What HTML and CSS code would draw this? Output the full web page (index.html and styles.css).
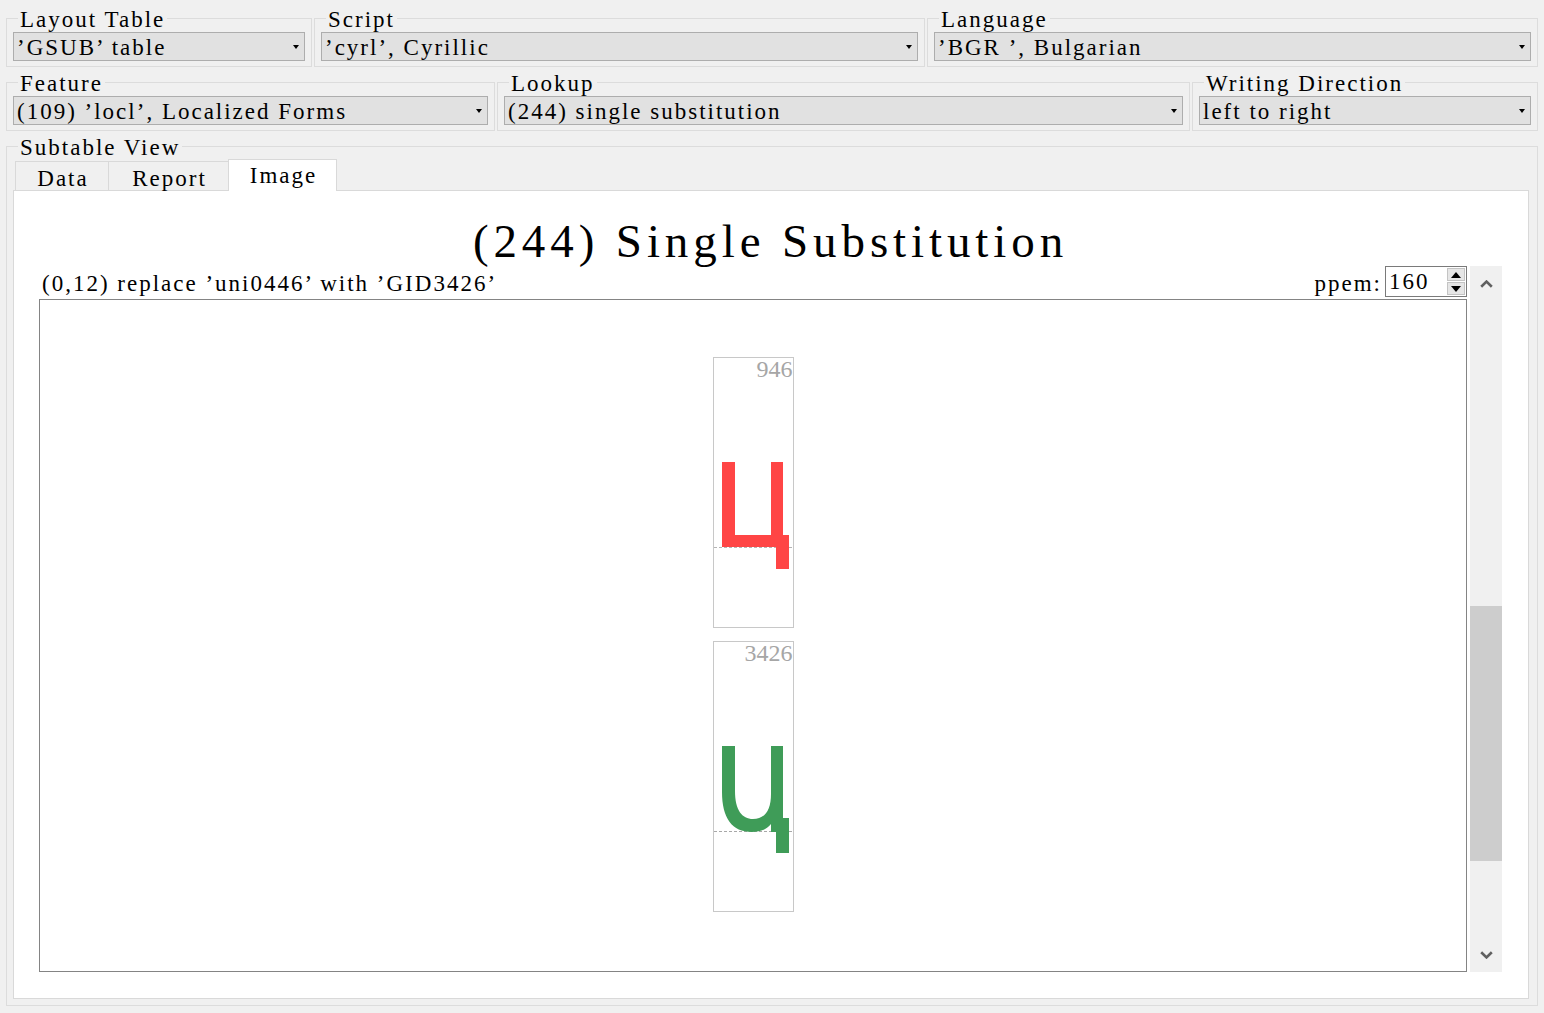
FILE: index.html
```html
<!DOCTYPE html>
<html>
<head>
<meta charset="utf-8">
<title>Subtable View</title>
<link rel="stylesheet" href="styles.css">
</head>
<body>
<div class="app">
  <div class="row row1">
    <fieldset class="group"><legend>Layout Table</legend>
      <div class="combo"><span>’GSUB’ table</span><i class="arrow"></i></div>
    </fieldset>
    <fieldset class="group"><legend>Script</legend>
      <div class="combo"><span>’cyrl’, Cyrillic</span><i class="arrow"></i></div>
    </fieldset>
    <fieldset class="group"><legend>Language</legend>
      <div class="combo"><span>’BGR ’, Bulgarian</span><i class="arrow"></i></div>
    </fieldset>
  </div>
  <div class="row row2">
    <fieldset class="group"><legend>Feature</legend>
      <div class="combo"><span>(109) ’locl’, Localized Forms</span><i class="arrow"></i></div>
    </fieldset>
    <fieldset class="group"><legend>Lookup</legend>
      <div class="combo"><span>(244) single substitution</span><i class="arrow"></i></div>
    </fieldset>
    <fieldset class="group"><legend>Writing Direction</legend>
      <div class="combo"><span>left to right</span><i class="arrow"></i></div>
    </fieldset>
  </div>
  <fieldset class="group subtable"><legend>Subtable View</legend>
    <div class="tabs">
      <div class="tab t-data">Data</div>
      <div class="tab t-report">Report</div>
      <div class="tab t-image active">Image</div>
    </div>
    <div class="pane">
      <h1 class="title">(244) Single Substitution</h1>
      <div class="viewer">
        <div class="main">
          <div class="header">
            <span class="caption">(0,12) replace ’uni0446’ with ’GID3426’</span>
            <div class="ppem">
              <span class="caption">ppem:</span>
              <div class="spin">
                <span class="spin-val">160</span>
                <div class="spin-btns">
                  <div class="sb"><i class="tri-up"></i></div>
                  <div class="sb"><i class="tri-down"></i></div>
                </div>
              </div>
            </div>
          </div>
          <div class="frame">
            <div class="glyph">
              <div class="gid">946</div>
              <svg viewBox="0 0 79 247" width="79" height="247">
                <line x1="0" y1="167.5" x2="79" y2="167.5" stroke="#b4b4b4" stroke-width="1" stroke-dasharray="3 2"/>
                <path fill="#ff4545" d="M8 82H21V155H57V82H69V155H75V189H62V167H8Z"/>
              </svg>
            </div>
            <div class="glyph">
              <div class="gid">3426</div>
              <svg viewBox="0 0 79 247" width="79" height="247">
                <line x1="0" y1="167.5" x2="79" y2="167.5" stroke="#a8a8a8" stroke-width="1" stroke-dasharray="3 2"/>
                <path fill="#3f9c58" d="M8 82H21V127C21 146 28 155 39 155C51 155 57 146 57 130V82H69V154H75V189H62V168H57V160C53 165 47 168 38 168C18 168 8 154 8 128Z"/>
              </svg>
            </div>
          </div>
        </div>
        <div class="vscroll">
          <div class="sbtn up">
            <svg width="13" height="8" viewBox="0 0 13 8"><path d="M1.2 6.8L6.5 1.6L11.8 6.8" fill="none" stroke="#606060" stroke-width="2.6"/></svg>
          </div>
          <div class="track"><div class="thumb"></div></div>
          <div class="sbtn down">
            <svg width="13" height="8" viewBox="0 0 13 8"><path d="M1.2 1.2L6.5 6.4L11.8 1.2" fill="none" stroke="#606060" stroke-width="2.6"/></svg>
          </div>
        </div>
      </div>
    </div>
  </fieldset>
</div>
</body>
</html>
```

FILE: styles.css
```css
* { box-sizing: border-box; }
html, body { margin: 0; }
body {
  background: #f0f0f0;
  font-family: "Liberation Serif", "Times New Roman", serif;
  font-size: 23px;
  letter-spacing: 2px;
  color: #000;
}
.app { padding: 7px 6px 0; }
.row { display: grid; gap: 2px; }
.row1 { grid-template-columns: 306px 611px 611px; }
.row2 { grid-template-columns: 489px 693px 346px; margin-top: 4px; }

.group {
  margin: 0;
  border: 1px solid #dcdcdc;
  padding: 3px 6px 5px;
  min-width: 0;
}
.group legend {
  padding: 0 2px;
  margin-left: 5px;
  line-height: 26px;
  height: 22px;
  white-space: nowrap;
}
.combo {
  height: 29px;
  border: 1px solid #adadad;
  background: #e1e1e1;
  display: flex;
  align-items: flex-start;
  justify-content: space-between;
  padding: 0 5px 0 3px;
  white-space: nowrap;
  overflow: hidden;
}
.combo span { line-height: 29px; }
.arrow {
  align-self: center;
  width: 0; height: 0;
  border-left: 3.5px solid transparent;
  border-right: 3.5px solid transparent;
  border-top: 4px solid #000;
}

.subtable { margin-top: 4px; padding: 2px 8px 6px 6px; }
.tabs { display: flex; align-items: flex-end; margin-left: 2px; height: 31px; }
.tab {
  height: 29px;
  border: 1px solid #d9d9d9;
  border-bottom: 0;
  background: #f0f0f0;
  text-align: center;
  line-height: 33px;
  padding-left: 2px;
}
.tab + .tab { margin-left: -1px; }
.t-data { width: 94px; }
.t-report { width: 121px; }
.t-image { width: 109px; }
.tab.active {
  height: 32px;
  margin-bottom: -1px;
  background: #fff;
  line-height: 32px;
  position: relative;
  z-index: 1;
}
.pane {
  height: 809px;
  background: #fff;
  border: 1px solid #d9d9d9;
  padding: 20px 26px 26px 25px;
  display: flex;
  flex-direction: column;
}
.title {
  margin: 0;
  font-weight: normal;
  font-size: 47px;
  line-height: 61px;
  letter-spacing: 4.9px;
  text-align: center;
  height: 55px;
  white-space: nowrap;
}
.viewer { display: flex; gap: 3px; flex: 1; min-height: 0; }
.main { flex: 1; display: flex; flex-direction: column; min-width: 0; }
.header {
  height: 33px;
  display: flex;
  justify-content: space-between;
  align-items: flex-start;
  padding-left: 3px;
  white-space: nowrap;
}
.caption { line-height: 35px; }
.ppem { display: flex; align-items: flex-start; gap: 3px; }
.spin {
  width: 82px;
  height: 31px;
  border: 1px solid #7a7a7a;
  background: #fff;
  display: flex;
  justify-content: space-between;
  padding: 0 1px 0 3px;
  line-height: 30px;
}
.spin-btns { display: flex; flex-direction: column; margin-top: 1px; }
.sb {
  width: 18px;
  height: 13px;
  background: #e6e6e6;
  border: 1px solid #c4c4c4;
  display: flex;
  align-items: center;
  justify-content: center;
}
.sb + .sb { margin-top: 1px; }
.tri-up, .tri-down { width: 0; height: 0; border-left: 5px solid transparent; border-right: 5px solid transparent; }
.tri-up { border-bottom: 6px solid #000; }
.tri-down { border-top: 6px solid #000; }

.frame {
  flex: 1;
  border: 1px solid #848484;
  display: flex;
  flex-direction: column;
  align-items: center;
  gap: 13px;
  padding-top: 57px;
}
.glyph {
  width: 81px;
  height: 271px;
  border: 1px solid #c8c8c8;
  display: flex;
  flex-direction: column;
  flex: none;
}
.gid {
  height: 22px;
  line-height: 22px;
  font-size: 24px;
  text-align: right;
  color: #a6a6a6;
  letter-spacing: 0;
}
.glyph svg { display: block; }

.vscroll { width: 32px; background: #f0f0f0; display: flex; flex-direction: column; flex: none; }
.sbtn { display: flex; align-items: center; justify-content: center; flex: none; }
.sbtn.up { height: 36px; }
.sbtn.down { height: 34px; }
.track { flex: 1; }
.thumb { margin-top: 304px; height: 255px; background: #cdcdcd; }
```
